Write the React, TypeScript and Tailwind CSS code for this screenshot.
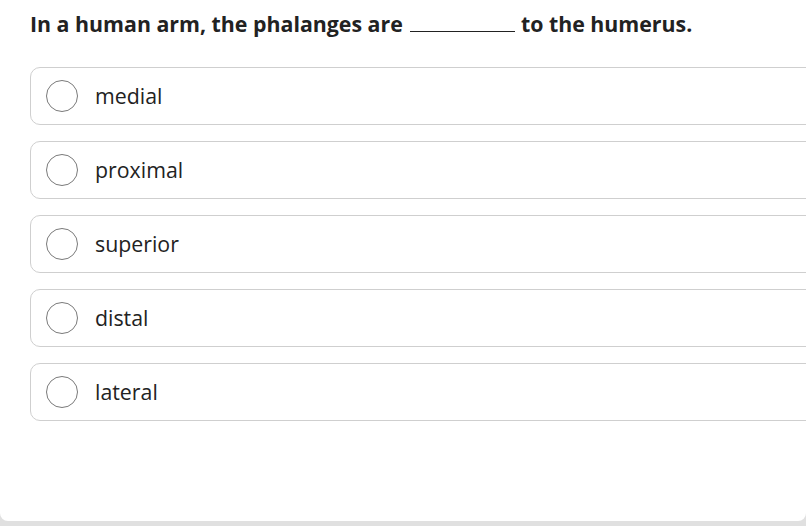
const options = ["medial", "proximal", "superior", "distal", "lateral"];

export default function App() {
  return (
    <div
      className="h-[526px] w-full bg-[#e0e0e0]"
      style={{ fontFamily: '"Open Sans", "Noto Sans", sans-serif' }}
    >
      <div className="h-[521px] overflow-hidden rounded-b-lg bg-white pl-[30px] pt-[9px]">
        {/* Question */}
        <h1 className="text-[21.33px] font-bold leading-[30px] text-[#222]">
          In a human arm, the phalanges are{" "}
          <span className="ml-[2px] inline-block w-[105px] border-b border-[#222] align-baseline"></span>{" "}
          to the humerus.
        </h1>

        {/* Options */}
        <div className="mt-[28px] flex flex-col gap-4">
          {options.map((opt) => (
            <label
              key={opt}
              className="-mr-4 flex h-[58px] cursor-pointer items-center rounded-[10px] border border-[#cfcfcf] pl-[15px]"
            >
              <span className="h-[32px] w-[32px] shrink-0 rounded-full border border-[#7a7a7a] bg-white"></span>
              <span className="ml-[17px] text-[21.33px] text-[#222]">{opt}</span>
            </label>
          ))}
        </div>
      </div>
    </div>
  );
}
